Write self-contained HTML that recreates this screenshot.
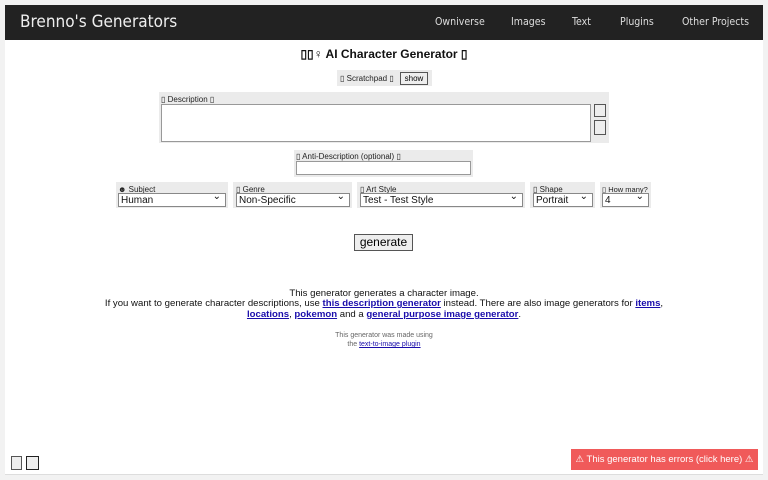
<!DOCTYPE html>
<html><head><meta charset="utf-8"><style>
*{box-sizing:border-box}
html,body{margin:0;width:768px;height:480px;overflow:hidden}
body{background:#f2f2f2;font-family:"Liberation Sans",sans-serif;position:relative}
.main{position:absolute;left:5px;top:5px;width:758px;height:470px;background:#fff;border-bottom:1px solid #ddd}
.hdr{position:absolute;left:5px;top:5px;width:758px;height:35px;background:#222;color:#fff;font-family:"DejaVu Sans Condensed","Liberation Sans",sans-serif}
.brand{position:absolute;left:15px;top:7px;font-size:17px;color:#eee}
.nav{position:absolute;top:11px;font-size:10.5px;color:#ddd;white-space:nowrap}
.a{position:absolute}
.box{position:absolute;background:#ebebeb}
.lbl{position:absolute;font-size:8px;color:#222;white-space:nowrap}
.sel{position:absolute;height:14px;border:1px solid #888;background:#fff;font-size:10px;padding:1px 2px;line-height:11px;color:#111}
.sel:after{content:"⌄";position:absolute;right:4px;top:-3px;font-size:10px}
.btn{position:absolute;border:1px solid #555;background:#eee;font-size:8px;text-align:center}
.t{position:absolute;left:0;width:768px;text-align:center;font-size:9.6px;color:#111;white-space:nowrap}
a{color:#1a0dab;font-weight:bold;text-decoration:underline}
</style></head><body>
<div class="main"></div>
<div class="hdr"><div class="brand">Brenno's Generators</div>
<div class="nav" style="left:430px">Owniverse</div>
<div class="nav" style="left:506px">Images</div>
<div class="nav" style="left:567px">Text</div>
<div class="nav" style="left:615px">Plugins</div>
<div class="nav" style="left:677px">Other Projects</div></div>
<div class="t" style="top:47px;font-size:12px;font-weight:bold">▯▯♀ AI Character Generator ▯</div>
<div class="box" style="left:337px;top:70px;width:95px;height:16px"></div>
<div class="lbl" style="left:340px;top:74px">▯ Scratchpad ▯</div>
<div class="btn" style="left:400px;top:72px;width:28px;height:13px;line-height:11px">show</div>
<div class="box" style="left:159px;top:92px;width:450px;height:51px"></div>
<div class="lbl" style="left:161px;top:95px">▯ Description ▯</div>
<div class="a" style="left:161px;top:104px;width:430px;height:38px;border:1px solid #999;background:#fff"></div>
<div class="btn" style="left:594px;top:104px;width:12px;height:13px"></div>
<div class="btn" style="left:594px;top:120px;width:12px;height:15px"></div>
<div class="box" style="left:294px;top:150px;width:179px;height:27px"></div>
<div class="lbl" style="left:296px;top:152px">▯ Anti-Description (optional) ▯</div>
<div class="a" style="left:296px;top:161px;width:175px;height:14px;border:1px solid #999;background:#fff"></div>
<div class="box" style="left:116px;top:182px;width:112px;height:26px"></div>
<div class="lbl" style="left:118px;top:185px">☻ Subject</div>
<div class="sel" style="left:118px;top:193px;width:108px">Human</div>
<div class="box" style="left:233px;top:182px;width:119px;height:26px"></div>
<div class="lbl" style="left:236px;top:185px">▯ Genre</div>
<div class="sel" style="left:236px;top:193px;width:114px">Non-Specific</div>
<div class="box" style="left:357px;top:182px;width:168px;height:26px"></div>
<div class="lbl" style="left:360px;top:185px">▯ Art Style</div>
<div class="sel" style="left:360px;top:193px;width:163px">Test - Test Style</div>
<div class="box" style="left:530px;top:182px;width:65px;height:26px"></div>
<div class="lbl" style="left:533px;top:185px">▯ Shape</div>
<div class="sel" style="left:533px;top:193px;width:60px">Portrait</div>
<div class="box" style="left:600px;top:182px;width:51px;height:26px"></div>
<div class="lbl" style="left:602px;top:185px;font-size:7.5px">▯ How many?</div>
<div class="sel" style="left:602px;top:193px;width:47px">4</div>
<div class="btn" style="left:354px;top:234px;width:59px;height:17px;font-size:12px;line-height:15px">generate</div>
<div class="t" style="top:288px">This generator generates a character image.</div>
<div class="t" style="top:298px">If you want to generate character descriptions, use <a>this description generator</a> instead. There are also image generators for <a>items</a>,</div>
<div class="t" style="top:309px"><a>locations</a>, <a>pokemon</a> and a <a>general purpose image generator</a>.</div>
<div class="t" style="top:332px;font-size:7px;color:#666">This generator was made using</div>
<div class="t" style="top:341px;font-size:7px;color:#666">the <a style="font-weight:normal">text-to-image plugin</a></div>
<div class="btn" style="left:11px;top:456px;width:11px;height:14px"></div>
<div class="btn" style="left:26px;top:456px;width:13px;height:14px;border-color:#222"></div>
<div class="a" style="left:571px;top:449px;width:187px;height:21px;background:#f05a5a;color:#fff;font-size:9.5px;line-height:21px;text-align:center;white-space:nowrap;overflow:hidden">⚠ This generator has errors (click here) ⚠</div>
</body></html>
